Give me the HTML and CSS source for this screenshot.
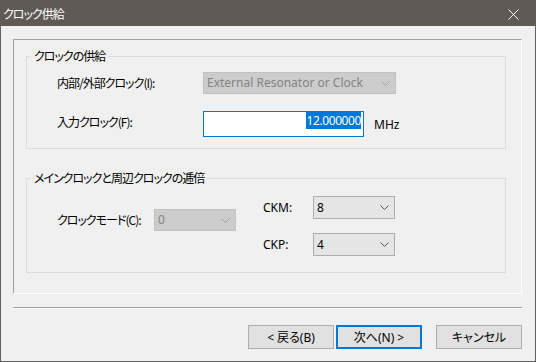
FILE: index.html
```html
<!DOCTYPE html>
<html lang="ja">
<head>
  <meta charset="UTF-8">
  <title>クロック供給</title>
  <link rel="stylesheet" href="styles.css">
</head>
<body>
  <div class="window">
    <div class="titlebar">
      <span class="title">クロック供給</span>
      <svg class="close" width="11" height="11" viewBox="0 0 11 11">
        <path d="M0.5 0.5 L10.5 10.5 M10.5 0.5 L0.5 10.5" stroke="#fff" stroke-width="1" fill="none"/>
      </svg>
    </div>

    <div class="dialog">
      <div class="panel">
        <div class="group group-supply">
          <span class="legend">クロックの供給</span>
          <div class="row row-source">
            <span class="label">内部/外部クロック(I):</span>
            <div class="combo disabled combo-wide">
              <span>External Resonator or Clock</span>
              <svg class="chevron" width="9" height="5" viewBox="0 0 9 5"><path d="M0.5 0.5 L4.5 4.5 L8.5 0.5" fill="none" stroke="#a2a2a2"/></svg>
            </div>
          </div>
          <div class="row row-input">
            <span class="label">入力クロック(F):</span>
            <div class="textbox"><span class="selected">12.000000</span></div>
            <span class="unit">MHz</span>
          </div>
        </div>

        <div class="group group-mult">
          <span class="legend">メインクロックと周辺クロックの逓倍</span>
          <div class="mult">
            <div class="mode">
              <span class="label mode-label">クロックモード(C):</span>
              <div class="combo disabled combo-small">
                <span>0</span>
                <svg class="chevron" width="9" height="5" viewBox="0 0 9 5"><path d="M0.5 0.5 L4.5 4.5 L8.5 0.5" fill="none" stroke="#a2a2a2"/></svg>
              </div>
            </div>
            <div class="ratios">
              <div class="ratio">
                <span class="ratio-label">CKM:</span>
                <div class="combo combo-small">
                  <span>8</span>
                  <svg class="chevron" width="9" height="5" viewBox="0 0 9 5"><path d="M0.5 0.5 L4.5 4.5 L8.5 0.5" fill="none" stroke="#5a5a5a"/></svg>
                </div>
              </div>
              <div class="ratio">
                <span class="ratio-label">CKP:</span>
                <div class="combo combo-small">
                  <span>4</span>
                  <svg class="chevron" width="9" height="5" viewBox="0 0 9 5"><path d="M0.5 0.5 L4.5 4.5 L8.5 0.5" fill="none" stroke="#5a5a5a"/></svg>
                </div>
              </div>
            </div>
          </div>
        </div>
      </div>

      <div class="separator"></div>

      <div class="buttons">
        <button class="btn">&lt; 戻る(B)</button>
        <button class="btn btn-default">次へ(N) &gt;</button>
        <button class="btn btn-cancel">キャンセル</button>
      </div>
    </div>
  </div>
</body>
</html>
```

FILE: styles.css
```css
body {
  margin: 0;
  background-color: #f0f0f0;
  font-family: "Noto Sans", "Noto Sans CJK JP", sans-serif;
  font-size: 12px;
  font-feature-settings: "palt";
  color: #000;
}
.window {
  width: 536px;
  height: 362px;
  box-sizing: border-box;
  border: 1px solid #626262;
  border-top-color: #5f5a55;
  background-color: #f0f0f0;
}
.titlebar {
  height: 25px;
  background-color: #5f5a55;
  display: flex;
  align-items: center;
  justify-content: space-between;
  padding: 0 17px 0 3px;
  margin: 0 -1px;
  color: #fff;
}
.title {
  font-family: "Noto Sans CJK JP", sans-serif;
  font-size: 12px;
  line-height: 16px;
  letter-spacing: -1px;
  margin-top: 1px;
}
.close {
  display: block;
  margin-top: 1px;
}
.dialog {
  padding: 13px 13px 0 12px;
}
.panel {
  width: 509px;
  box-sizing: border-box;
  border: 1px solid #a0a0a0;
  border-right-color: #fff;
  border-bottom-color: #fff;
  padding: 16px 15px 20px 12px;
}
.group {
  position: relative;
  width: 480px;
  box-sizing: border-box;
  border: 1px solid #dcdcdc;
}
.legend {
  position: absolute;
  top: -9px;
  left: 4px;
  padding: 0 3px;
  background-color: #f0f0f0;
  font-family: "Noto Sans CJK JP", sans-serif;
  line-height: 16px;
  letter-spacing: -1px;
  white-space: nowrap;
}
.group-supply {
  height: 93px;
  padding: 15px 0 0 30px;
}
.group-mult {
  height: 95px;
  margin-top: 29px;
  padding: 17px 0 0 30px;
}
.row {
  display: flex;
  align-items: center;
}
.row-input {
  margin-top: 17px;
  align-items: flex-start;
}
.label {
  width: 146px;
  flex: none;
  font-family: "Noto Sans CJK JP", sans-serif;
  line-height: 16px;
  letter-spacing: -1px;
  white-space: nowrap;
}
.row-input .label {
  margin-top: 3px;
}
.combo {
  height: 22px;
  box-sizing: border-box;
  border: 1px solid #adadad;
  background-color: #e5e5e5;
  display: flex;
  align-items: center;
  justify-content: space-between;
  padding: 0 5px 0 3px;
  line-height: 16px;
}
.combo.disabled {
  background-color: #cccccc;
  border-color: #c2c2c2;
  color: #838383;
}
.combo-wide {
  width: 193px;
}
.combo-small {
  width: 82px;
}
.chevron {
  display: block;
  flex: none;
}
.textbox {
  width: 161px;
  height: 26px;
  box-sizing: border-box;
  border: 1px solid #0078d7;
  background-color: #fff;
  padding: 1px 2px;
  text-align: right;
  line-height: 16px;
}
.selected {
  background-color: #0078d7;
  color: #fff;
  letter-spacing: -0.4px;
}
.unit {
  margin: 6px 0 0 10px;
  line-height: 16px;
}
.mult {
  display: flex;
  align-items: flex-start;
}
.mode {
  display: flex;
  align-items: center;
  margin-top: 13px;
}
.mode-label {
  width: 97px;
}
.ratios {
  margin-left: 27px;
  display: flex;
  flex-direction: column;
  gap: 14px;
}
.ratio {
  display: flex;
  align-items: center;
}
.ratio-label {
  width: 50px;
  line-height: 16px;
}
.ratio .combo {
  height: 23px;
}
.separator {
  width: 509px;
  margin-top: 13px;
  border-top: 1px solid #a0a0a0;
  border-bottom: 1px solid #fff;
}
.buttons {
  width: 509px;
  margin-top: 16px;
  display: flex;
  justify-content: flex-end;
}
.btn {
  width: 86px;
  height: 24px;
  box-sizing: border-box;
  border: 1px solid #adadad;
  background-color: #e1e1e1;
  font-family: "Noto Sans", "Noto Sans CJK JP", sans-serif;
  font-size: 12px;
  font-feature-settings: "palt";
  color: #000;
  padding: 0;
  margin: 0;
}
.btn-default {
  margin-left: 2px;
  border: 2px solid #0078d7;
}
.btn-cancel {
  margin-left: 14px;
}
```
